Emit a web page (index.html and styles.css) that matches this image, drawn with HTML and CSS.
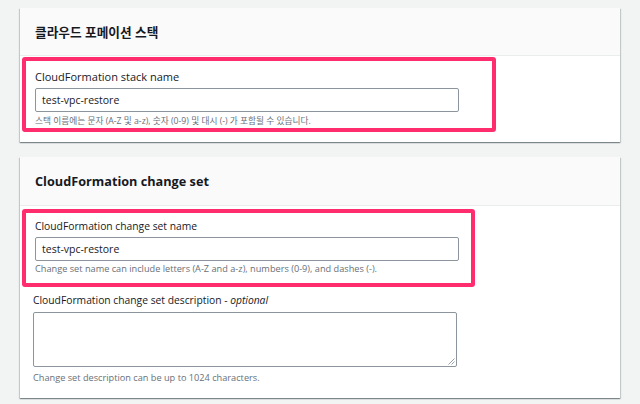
FILE: index.html
```html
<!DOCTYPE html>
<html lang="ko">
<head>
<meta charset="utf-8">
<title>CloudFormation</title>
<link rel="stylesheet" href="styles.css">
</head>
<body>
<div class="page">
  <section class="card">
    <header class="card-header">
      <h2 class="card-title">클라우드 포메이션 스택</h2>
    </header>
    <div class="card-body card-body-1">
      <div class="highlight hl-1">
        <div class="field">
          <label class="label">CloudFormation stack name</label>
          <div class="input">test-vpc-restore</div>
          <div class="help">스택 이름에는 문자 (A-Z 및 a-z), 숫자 (0-9) 및 대시 (-) 가 포함될 수 있습니다.</div>
        </div>
      </div>
    </div>
  </section>

  <section class="card">
    <header class="card-header card-header-2">
      <h2 class="card-title">CloudFormation change set</h2>
    </header>
    <div class="card-body card-body-2">
      <div class="highlight hl-2">
        <div class="field">
          <label class="label">CloudFormation change set name</label>
          <div class="input">test-vpc-restore</div>
          <div class="help">Change set name can include letters (A-Z and a-z), numbers (0-9), and dashes (-).</div>
        </div>
      </div>
      <div class="field field-plain">
        <label class="label">CloudFormation change set description - <i>optional</i></label>
        <div class="textarea">
          <svg class="grip" width="7" height="7" viewBox="0 0 7 7"><path d="M6.5 0.5 L0.5 6.5 M6.5 3.5 L3.5 6.5" stroke="#9aa0a6" stroke-width="1" fill="none"/></svg>
        </div>
        <div class="help help-desc">Change set description can be up to 1024 characters.</div>
      </div>
    </div>
  </section>
</div>
</body>
</html>
```

FILE: styles.css
```css
* { box-sizing: border-box; }
html, body { margin: 0; padding: 0; }
body {
  background: #f2f3f3;
  font-family: "Open Sans", "Noto Sans CJK KR", sans-serif;
  color: #16191f;
  width: 640px;
  height: 404px;
  overflow: hidden;
}
.page {
  padding: 8px 20px 0 20px;
  display: flex;
  flex-direction: column;
  gap: 15px;
}
.card {
  background: #fff;
  box-shadow: 0 1px 1px 0 rgba(0,28,36,.3), 1px 1px 1px 0 rgba(0,28,36,.15), -1px 1px 1px 0 rgba(0,28,36,.15);
}
.card-header {
  background: #fafafa;
  border-bottom: 1px solid #eaeded;
  height: 48px;
  padding: 0 15px;
  display: flex;
  align-items: center;
}
.card-header-2 { height: 49px; }
.card-title {
  margin: 0;
  font-size: 12.7px;
  font-weight: 700;
  line-height: 18px;
  font-family: "Open Sans", "Noto Sans CJK KR", sans-serif;
}
.card-body-1 { padding: 1px 0 10px 2px; }
.card-body-2 { padding: 3px 0 13px 2px; }
.highlight {
  border: 4px solid #ff2d6e;
  border-radius: 3px;
  padding: 0 0 0 9px;
}
.hl-1 { width: 474px; padding-top: 9px; padding-bottom: 0; }
.hl-2 { width: 453px; padding-top: 6px; padding-bottom: 7px; }
.field { display: flex; flex-direction: column; }
.label {
  font-size: 10.3px;
  line-height: 14px;
  color: #16191f;
}
.hl-1 .label { font-size: 11px; }
.label i { font-style: italic; }
.input {
  margin-top: 4px;
  width: 424px;
  height: 24px;
  border: 1px solid #8c959d;
  border-radius: 2px;
  font-size: 10.5px;
  line-height: 22px;
  padding: 0 6px;
  color: #16191f;
}
.help {
  font-size: 9.2px;
  line-height: 14px;
  color: #687078;
  margin-top: 2px;
}
.hl-1 .help { font-size: 8.7px; }
.hl-2 .help { margin-top: 1px; }
.field-plain { padding: 6px 0 0 11px; }
.textarea {
  margin-top: 5px;
  width: 424px;
  height: 55px;
  border: 1px solid #8c959d;
  border-radius: 2px;
  position: relative;
}
.grip { position: absolute; right: 1px; bottom: 1px; }
.help-desc { margin-top: 4px; }
```
